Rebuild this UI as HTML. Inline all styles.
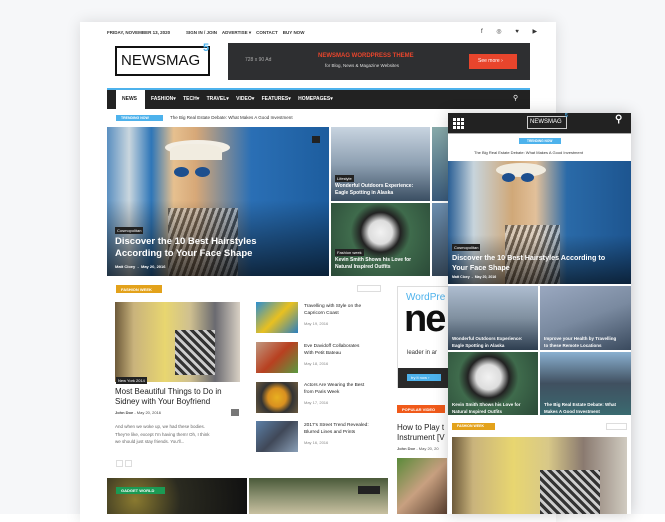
<!DOCTYPE html>
<html><head><meta charset="utf-8"><style>
*{margin:0;padding:0;box-sizing:border-box}
body{width:665px;height:514px;overflow:hidden;background:#fff;font-family:"Liberation Sans",sans-serif;position:relative}
.a{position:absolute}
.t{position:absolute;white-space:nowrap}
.w{color:#fff;font-weight:bold}
.lbl{position:absolute;background:#222;color:#fff;font-size:4px;padding:1px 2px}
</style></head><body>
<div class="a" style="left:0;top:0;width:665px;height:514px;background:#f6f7f9"></div>
<!-- desktop page -->
<div class="a" style="left:80px;top:22px;width:476px;height:500px;background:#fff;box-shadow:0 0 14px rgba(0,0,0,.12)"></div>
<div class="t" style="left:107px;top:30px;font-size:4.5px;color:#333;font-weight:bold">FRIDAY, NOVEMBER 13, 2020</div>
<div class="t" style="left:186px;top:30px;font-size:4.5px;color:#333;font-weight:bold">SIGN IN / JOIN &nbsp;&nbsp; ADVERTISE ▾ &nbsp;&nbsp; CONTACT &nbsp;&nbsp; BUY NOW</div>
<div class="t" style="left:481px;top:28px;font-size:6px;color:#333;letter-spacing:6px">f ◎ ♥ ▶</div>
<div class="a" style="left:115px;top:46px;width:95px;height:30px;border:2px solid #111"></div>
<div class="t" style="left:121px;top:52px;font-size:15px;color:#111">NEWSMAG</div>
<div class="t" style="left:203px;top:42px;font-size:11px;color:#4db2ec;font-weight:bold">5</div>
<div class="a" style="left:228px;top:43px;width:302px;height:37px;background:#2e2f31"></div>
<div class="t" style="left:245px;top:57px;font-size:5px;color:#aaa">728 x 90 Ad</div>
<div class="t" style="left:318px;top:53px;font-size:6px;color:#e8452c;font-weight:bold">NEWSMAG WORDPRESS THEME</div>
<div class="t" style="left:325px;top:63px;font-size:4.5px;color:#ddd">for Blog, News &amp; Magazine Websites</div>
<div class="a" style="left:469px;top:54px;width:48px;height:15px;background:#e8452c"></div>
<div class="t" style="left:478px;top:58px;font-size:5px;color:#fff">See more ›</div>
<!-- nav -->
<div class="a" style="left:107px;top:88px;width:423px;height:2px;background:#4db2ec"></div>
<div class="a" style="left:107px;top:90px;width:423px;height:19px;background:#222"></div>
<div class="a" style="left:116px;top:90px;width:29px;height:19px;background:#fff"></div>
<div class="t" style="left:122px;top:96px;font-size:5px;font-weight:bold;color:#222">NEWS</div>
<div class="t" style="left:151px;top:96px;font-size:5px;font-weight:bold;color:#fff;word-spacing:6px">FASHION▾ TECH▾ TRAVEL▾ VIDEO▾ FEATURES▾ HOMEPAGES▾</div>
<div class="t" style="left:513px;top:94px;font-size:7px;color:#fff">⚲</div>
<div class="a" style="left:116px;top:115px;width:47px;height:6px;background:#4db2ec"></div>
<div class="t" style="left:121px;top:116px;font-size:3.5px;color:#fff;font-weight:bold">TRENDING NOW</div>
<div class="t" style="left:170px;top:115px;font-size:4.5px;color:#333">The Big Real Estate Debate: What Makes A Good Investment</div>
<!-- hero -->
<div class="a" style="left:107px;top:127px;width:222px;height:149px;background:linear-gradient(90deg,#5a8fc0 0,#c9d6de 10%,#2e76b8 20%,#e6c08f 30%,#d7a878 40%,#2a6fb5 65%,#1d5d9e 100%)"></div>
<div class="a" style="left:165px;top:140px;width:65px;height:15px;border-radius:50%;background:#f3efe6"></div>
<div class="a" style="left:170px;top:144px;width:52px;height:16px;background:#f1ece0;border-radius:40% 40% 0 0"></div>
<div class="a" style="left:174px;top:167px;width:15px;height:10px;border-radius:50%;background:#1d4f8e"></div>
<div class="a" style="left:195px;top:167px;width:15px;height:10px;border-radius:50%;background:#1d4f8e"></div>
<div class="a" style="left:168px;top:208px;width:70px;height:68px;background:repeating-linear-gradient(110deg,#333 0 3px,#ddd 3px 6px);opacity:.6"></div>
<div class="a" style="left:107px;top:200px;width:222px;height:76px;background:linear-gradient(transparent,rgba(0,0,0,.65))"></div>
<div class="lbl" style="left:115px;top:227px">Cosmopolitan</div>
<div class="t w" style="left:115px;top:236px;font-size:9.5px;line-height:12px">Discover the 10 Best Hairstyles<br>According to Your Face Shape</div>
<div class="t w" style="left:115px;top:264px;font-size:4px">Matt Cloey &nbsp;-&nbsp; May 20, 2016</div>
<div class="a" style="left:312px;top:136px;width:8px;height:7px;background:#222"></div>
<div class="a" style="left:331px;top:127px;width:99px;height:74px;background:linear-gradient(#c8d4e0,#8ea0b2 50%,#3a4e62)"></div>
<div class="a" style="left:432px;top:127px;width:20px;height:74px;background:linear-gradient(#8aa,#3a5a7a)"></div>
<div class="lbl" style="left:335px;top:175px">Lifestyle</div>
<div class="t w" style="left:335px;top:183px;font-size:5px;line-height:7px">Wonderful Outdoors Experience:<br>Eagle Spotting in Alaska</div>
<div class="a" style="left:331px;top:203px;width:99px;height:73px;background:radial-gradient(circle at 50% 40%,#f2f2f2 0,#ddd 18%,#222 30%,#3f6b4c 45%,#2b4a38)"></div>
<div class="a" style="left:432px;top:203px;width:20px;height:73px;background:linear-gradient(#6d8fb0,#345)"></div>
<div class="lbl" style="left:335px;top:249px">Fashion week</div>
<div class="t w" style="left:335px;top:257px;font-size:5px;line-height:7px">Kevin Smith Shows his Love for<br>Natural Inspired Outfits</div>
<!-- fashion week -->
<div class="a" style="left:116px;top:285px;width:46px;height:8px;background:#e3a21b"></div>
<div class="t" style="left:121px;top:287px;font-size:4px;color:#fff;font-weight:bold">FASHION WEEK</div>
<div class="a" style="left:357px;top:285px;width:24px;height:7px;border:1px solid #ddd"></div>
<div class="a" style="left:115px;top:302px;width:125px;height:80px;background:linear-gradient(90deg,#6d5a3a 0,#c9b37c 15%,#e8d670 40%,#cfc090 60%,#6a6a70 80%,#d8d0c4)"></div>
<div class="a" style="left:175px;top:330px;width:40px;height:45px;background:repeating-linear-gradient(45deg,#333 0 3px,#ccc 3px 6px)"></div>
<div class="lbl" style="left:116px;top:377px">New York 2014</div>
<div class="t" style="left:115px;top:387px;font-size:8px;line-height:10px;color:#222">Most Beautiful Things to Do in<br>Sidney with Your Boyfriend</div>
<div class="t" style="left:115px;top:410px;font-size:4px;color:#444"><b>John Doe</b> - May 20, 2016</div>
<div class="a" style="left:231px;top:409px;width:8px;height:7px;background:#777"></div>
<div class="t" style="left:115px;top:423px;font-size:4.5px;line-height:7.5px;color:#666">And when we woke up, we had these bodies.<br>They're like, except I'm having them! Oh, I think<br>we should just stay friends. You'll...</div>
<div class="a" style="left:116px;top:460px;width:7px;height:7px;border:1px solid #ddd"></div>
<div class="a" style="left:125px;top:460px;width:7px;height:7px;border:1px solid #ddd"></div>
<div class="a" style="left:256px;top:302px;width:42px;height:31px;background:linear-gradient(135deg,#2c8fd0,#e8c020 50%,#2a7fc0)"></div>
<div class="a" style="left:256px;top:342px;width:42px;height:31px;background:linear-gradient(135deg,#c09880,#b84020 50%,#5a9a40)"></div>
<div class="a" style="left:256px;top:382px;width:42px;height:31px;background:radial-gradient(circle,#e8b020 0,#d99020 35%,#333 60%,#6a5a40)"></div>
<div class="a" style="left:256px;top:421px;width:42px;height:31px;background:linear-gradient(135deg,#5c80a8,#404858 50%,#8aa0b8)"></div>
<div class="t" style="left:304px;top:303px;font-size:4.8px;line-height:7px;color:#222">Travelling with Style on the<br>Capricorn Coast</div>
<div class="t" style="left:304px;top:321px;font-size:4px;color:#888">May 19, 2016</div>
<div class="t" style="left:304px;top:343px;font-size:4.8px;line-height:7px;color:#222">Eve Davidoff Collaborates<br>With Petit Bateau</div>
<div class="t" style="left:304px;top:361px;font-size:4px;color:#888">May 18, 2016</div>
<div class="t" style="left:304px;top:382px;font-size:4.8px;line-height:7px;color:#222">Actors Are Wearing the Best<br>from Paris Week</div>
<div class="t" style="left:304px;top:400px;font-size:4px;color:#888">May 17, 2016</div>
<div class="t" style="left:304px;top:422px;font-size:4.8px;line-height:7px;color:#222">2017's Street Trend Revealed:<br>Blurred Lines and Prints</div>
<div class="t" style="left:304px;top:440px;font-size:4px;color:#888">May 16, 2016</div>
<div class="a" style="left:107px;top:478px;width:140px;height:36px;background:radial-gradient(circle at 20% 60%,#8a7a30,#2a2a20 40%,#111)"></div>
<div class="a" style="left:116px;top:487px;width:49px;height:7px;background:#1b9a54"></div>
<div class="t" style="left:121px;top:488px;font-size:4px;color:#fff;font-weight:bold">GADGET WORLD</div>
<div class="a" style="left:249px;top:478px;width:139px;height:36px;background:linear-gradient(#4a5a3a,#8a9070 50%,#c8c0a0)"></div>
<div class="a" style="left:358px;top:486px;width:22px;height:8px;background:#222"></div>
<!-- sidebar ad -->
<div class="a" style="left:397px;top:286px;width:60px;height:102px;border:1px solid #ddd;background:#fff"></div>
<div class="t" style="left:406px;top:292px;font-size:10px;color:#4db2ec">WordPre</div>
<div class="t" style="left:404px;top:298px;font-size:38px;font-weight:bold;color:#111;letter-spacing:-2px">ne</div>
<div class="t" style="left:407px;top:350px;font-size:6px;color:#333">leader in ar</div>
<div class="a" style="left:398px;top:368px;width:58px;height:20px;background:#2a2a2a"></div>
<div class="a" style="left:407px;top:374px;width:34px;height:7px;background:#4db2ec"></div>
<div class="t" style="left:411px;top:375px;font-size:4px;color:#fff">try it now ›</div>
<div class="a" style="left:397px;top:405px;width:48px;height:8px;background:#f05a1a"></div>
<div class="t" style="left:402px;top:407px;font-size:4px;color:#fff;font-weight:bold">POPULAR VIDEO</div>
<div class="t" style="left:397px;top:423px;font-size:8px;line-height:10px;color:#222">How to Play t<br>Instrument [V</div>
<div class="t" style="left:397px;top:446px;font-size:4px;color:#555"><b>John Doe</b> - May 20, 20</div>
<div class="a" style="left:397px;top:458px;width:50px;height:56px;background:linear-gradient(135deg,#5a8a3a,#c8a080 50%,#5a4030)"></div>
<!-- mobile -->
<div class="a" style="left:448px;top:113px;width:183px;height:401px;background:#fff;box-shadow:0 0 14px rgba(0,0,0,.2)"></div>
<div class="a" style="left:448px;top:113px;width:183px;height:20px;background:#222"></div>
<div class="a" style="left:453px;top:118px;width:11px;height:11px;background:repeating-linear-gradient(90deg,#fff 0 3px,transparent 3px 4px),#222;-webkit-mask:repeating-linear-gradient(#000 0 3px,transparent 3px 4px)"></div>
<div class="a" style="left:527px;top:116px;width:40px;height:13px;border:1px solid #ccc"></div>
<div class="t" style="left:530px;top:119px;font-size:6px;color:#fff">NEWSMAG</div>
<div class="t" style="left:565px;top:113px;font-size:5px;color:#4db2ec;font-weight:bold">5</div>
<div class="t" style="left:615px;top:114px;font-size:10px;color:#fff;font-weight:bold">⚲</div>
<div class="a" style="left:448px;top:133px;width:183px;height:1px;background:#aaa"></div>
<div class="a" style="left:519px;top:138px;width:42px;height:6px;background:#4db2ec"></div>
<div class="t" style="left:527px;top:139px;font-size:3.2px;color:#fff;font-weight:bold">TRENDING NOW</div>
<div class="t" style="left:474px;top:150px;font-size:4px;color:#333">The Big Real Estate Debate: What Makes A Good Investment</div>
<div class="a" style="left:448px;top:161px;width:183px;height:123px;background:linear-gradient(90deg,#2a5f95 0,#c7d4dc 14%,#d0a878 35%,#e2c09a 48%,#2a6aa8 65%,#1d5590)"></div>
<div class="a" style="left:496px;top:163px;width:50px;height:14px;border-radius:50%;background:#f1ece0"></div>
<div class="a" style="left:502px;top:173px;width:13px;height:9px;border-radius:50%;background:#1d4f8e"></div>
<div class="a" style="left:521px;top:173px;width:13px;height:9px;border-radius:50%;background:#1d4f8e"></div>
<div class="a" style="left:505px;top:225px;width:55px;height:59px;background:repeating-linear-gradient(110deg,#333 0 3px,#ddd 3px 6px);opacity:.6"></div>
<div class="a" style="left:448px;top:235px;width:183px;height:49px;background:linear-gradient(transparent,rgba(0,0,0,.6))"></div>
<div class="lbl" style="left:452px;top:244px">Cosmopolitan</div>
<div class="t w" style="left:452px;top:253px;font-size:7.2px;line-height:10px">Discover the 10 Best Hairstyles According to<br>Your Face Shape</div>
<div class="t w" style="left:452px;top:275px;font-size:3.5px">Matt Cloey &nbsp;-&nbsp; May 20, 2016</div>
<div class="a" style="left:448px;top:286px;width:90px;height:64px;background:linear-gradient(#aebdd0,#8090a0 50%,#2e3e50)"></div>
<div class="a" style="left:540px;top:286px;width:91px;height:64px;background:linear-gradient(160deg,#9aa8c0,#7a8aa0 50%,#3a4a5e)"></div>
<div class="a" style="left:448px;top:352px;width:90px;height:63px;background:radial-gradient(circle at 45% 40%,#f2f2f2 0,#ddd 20%,#222 33%,#3f6b4c 48%,#2b4a38)"></div>
<div class="a" style="left:540px;top:352px;width:91px;height:63px;background:linear-gradient(#8ab0d0,#405060 50%,#3a6a70)"></div>
<div class="t w" style="left:452px;top:336px;font-size:4.5px;line-height:6.5px">Wonderful Outdoors Experience:<br>Eagle Spotting in Alaska</div>
<div class="t w" style="left:544px;top:336px;font-size:4.5px;line-height:6.5px">Improve your Health by Travelling<br>to these Remote Locations</div>
<div class="t w" style="left:452px;top:402px;font-size:4.5px;line-height:6.5px">Kevin Smith Shows his Love for<br>Natural Inspired Outfits</div>
<div class="t w" style="left:544px;top:402px;font-size:4.5px;line-height:6.5px">The Big Real Estate Debate: What<br>Makes A Good Investment</div>
<div class="a" style="left:452px;top:423px;width:43px;height:7px;background:#e3a21b"></div>
<div class="t" style="left:457px;top:424px;font-size:3.5px;color:#fff;font-weight:bold">FASHION WEEK</div>
<div class="a" style="left:606px;top:423px;width:21px;height:7px;border:1px solid #ddd"></div>
<div class="a" style="left:452px;top:437px;width:175px;height:77px;background:linear-gradient(90deg,#6d5a3a 0,#c9b37c 12%,#e8d670 35%,#d8c888 55%,#8a7a70 75%,#d0cbc0)"></div>
<div class="a" style="left:540px;top:470px;width:60px;height:44px;background:repeating-linear-gradient(45deg,#333 0 3px,#ccc 3px 6px)"></div>
</body></html>
